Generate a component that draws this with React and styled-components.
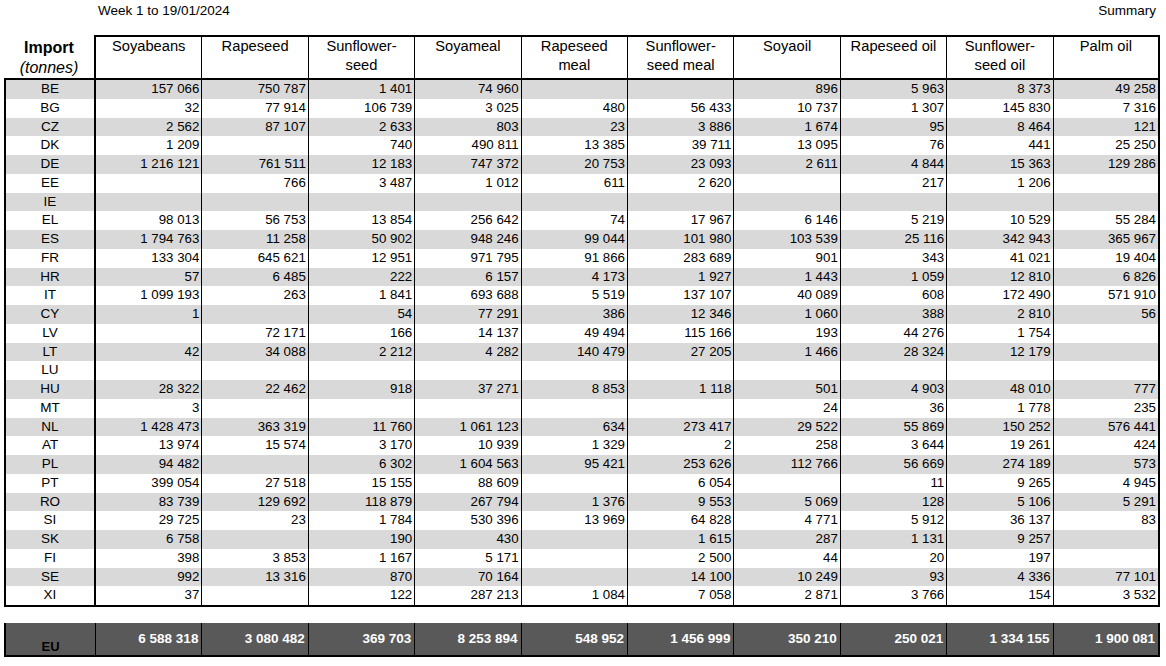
import React from "react"
import styled, { createGlobalStyle } from "styled-components"

const GlobalStyle = createGlobalStyle`
  body {
    margin: 0;
    background: #fff;
    color: #000;
    font-family: "Liberation Sans", Arial, sans-serif;
  }
`

const COLUMNS = "92px repeat(10, 1fr)"

const HEADINGS = [
  ["Soyabeans"],
  ["Rapeseed"],
  ["Sunflower-", "seed"],
  ["Soyameal"],
  ["Rapeseed", "meal"],
  ["Sunflower-", "seed meal"],
  ["Soyaoil"],
  ["Rapeseed oil"],
  ["Sunflower-", "seed oil"],
  ["Palm oil"],
]

const ROWS = [
  ["BE", "157 066", "750 787", "1 401", "74 960", "", "", "896", "5 963", "8 373", "49 258"],
  ["BG", "32", "77 914", "106 739", "3 025", "480", "56 433", "10 737", "1 307", "145 830", "7 316"],
  ["CZ", "2 562", "87 107", "2 633", "803", "23", "3 886", "1 674", "95", "8 464", "121"],
  ["DK", "1 209", "", "740", "490 811", "13 385", "39 711", "13 095", "76", "441", "25 250"],
  ["DE", "1 216 121", "761 511", "12 183", "747 372", "20 753", "23 093", "2 611", "4 844", "15 363", "129 286"],
  ["EE", "", "766", "3 487", "1 012", "611", "2 620", "", "217", "1 206", ""],
  ["IE", "", "", "", "", "", "", "", "", "", ""],
  ["EL", "98 013", "56 753", "13 854", "256 642", "74", "17 967", "6 146", "5 219", "10 529", "55 284"],
  ["ES", "1 794 763", "11 258", "50 902", "948 246", "99 044", "101 980", "103 539", "25 116", "342 943", "365 967"],
  ["FR", "133 304", "645 621", "12 951", "971 795", "91 866", "283 689", "901", "343", "41 021", "19 404"],
  ["HR", "57", "6 485", "222", "6 157", "4 173", "1 927", "1 443", "1 059", "12 810", "6 826"],
  ["IT", "1 099 193", "263", "1 841", "693 688", "5 519", "137 107", "40 089", "608", "172 490", "571 910"],
  ["CY", "1", "", "54", "77 291", "386", "12 346", "1 060", "388", "2 810", "56"],
  ["LV", "", "72 171", "166", "14 137", "49 494", "115 166", "193", "44 276", "1 754", ""],
  ["LT", "42", "34 088", "2 212", "4 282", "140 479", "27 205", "1 466", "28 324", "12 179", ""],
  ["LU", "", "", "", "", "", "", "", "", "", ""],
  ["HU", "28 322", "22 462", "918", "37 271", "8 853", "1 118", "501", "4 903", "48 010", "777"],
  ["MT", "3", "", "", "", "", "", "24", "36", "1 778", "235"],
  ["NL", "1 428 473", "363 319", "11 760", "1 061 123", "634", "273 417", "29 522", "55 869", "150 252", "576 441"],
  ["AT", "13 974", "15 574", "3 170", "10 939", "1 329", "2", "258", "3 644", "19 261", "424"],
  ["PL", "94 482", "", "6 302", "1 604 563", "95 421", "253 626", "112 766", "56 669", "274 189", "573"],
  ["PT", "399 054", "27 518", "15 155", "88 609", "", "6 054", "", "11", "9 265", "4 945"],
  ["RO", "83 739", "129 692", "118 879", "267 794", "1 376", "9 553", "5 069", "128", "5 106", "5 291"],
  ["SI", "29 725", "23", "1 784", "530 396", "13 969", "64 828", "4 771", "5 912", "36 137", "83"],
  ["SK", "6 758", "", "190", "430", "", "1 615", "287", "1 131", "9 257", ""],
  ["FI", "398", "3 853", "1 167", "5 171", "", "2 500", "44", "20", "197", ""],
  ["SE", "992", "13 316", "870", "70 164", "", "14 100", "10 249", "93", "4 336", "77 101"],
  ["XI", "37", "", "122", "287 213", "1 084", "7 058", "2 871", "3 766", "154", "3 532"],
]

const TOTAL = ["EU", "6 588 318", "3 080 482", "369 703", "8 253 894", "548 952", "1 456 999", "350 210", "250 021", "1 334 155", "1 900 081"]

const Page = styled.div`
  width: 1166px;
  height: 666px;
  overflow: hidden;
`

const TopBar = styled.div`
  display: flex;
  justify-content: space-between;

  height: 22px;
  padding: 0 10px 0 98px;

  font-size: 13.5px;
  line-height: 22px;
`

const Sheet = styled.div`
  width: 1156px;
  margin: 13px 0 0 4px;
`

const HeaderRow = styled.div`
  display: grid;
  grid-template-columns: ${COLUMNS};

  box-sizing: border-box;
  height: 45px;

  border-bottom: 2px solid #000;
`

const Corner = styled.div`
  display: flex;
  flex-direction: column;
  justify-content: flex-end;
  align-items: center;

  border-right: 2px solid #000;

  font-size: 16px;
  line-height: 20px;
`

const CornerTitle = styled.b``

const CornerUnit = styled.i``

const Heading = styled.div`
  box-sizing: border-box;

  border-top: 2px solid #000;
  border-right: 1px solid #000;

  text-align: center;
  font-size: 14.7px;
  line-height: 19px;

  &:last-child {
    border-right-width: 2px;
  }
`

const Body = styled.div`
  border-bottom: 2px solid #000;
`

const Row = styled.div`
  display: grid;
  grid-template-columns: ${COLUMNS};

  height: 18.75px;

  background: ${({ $shaded }) => ($shaded ? "#d9d9d9" : "#fff")};
  font-size: 13.3px;
  line-height: 18.75px;
`

const Country = styled.div`
  box-sizing: border-box;

  border-left: 2px solid #000;
  border-right: 2px solid #000;

  text-align: center;
  font-size: 13.5px;
`

const Value = styled.div`
  box-sizing: border-box;

  padding-right: 2px;

  border-right: 1px solid #000;

  text-align: right;
  white-space: nowrap;

  &:last-child {
    border-right-width: 2px;
  }
`

const TotalRow = styled.div`
  display: grid;
  grid-template-columns: ${COLUMNS};

  box-sizing: border-box;
  height: 34px;
  margin-top: 16px;

  border-bottom: 2px solid #000;

  background: #595959;
  font-weight: bold;
  font-size: 13.5px;
`

const TotalLabel = styled.div`
  display: flex;
  align-items: flex-end;
  justify-content: center;

  box-sizing: border-box;

  border-left: 2px solid #000;
  border-right: 1px solid #000;

  color: #000;
  font-size: 13px;
  line-height: 16px;
`

const TotalValue = styled.div`
  box-sizing: border-box;

  padding: 6px 3px 0 0;

  border-right: 1px solid #000;

  color: #fff;
  text-align: right;
  white-space: nowrap;
  line-height: 20px;

  &:last-child {
    border-right-width: 2px;
  }
`

export default function App() {
  return (
    <Page>
      <GlobalStyle />
      <TopBar>
        <span>Week 1 to 19/01/2024</span>
        <span>Summary</span>
      </TopBar>
      <Sheet>
        <HeaderRow>
          <Corner>
            <CornerTitle>Import</CornerTitle>
            <CornerUnit>(tonnes)</CornerUnit>
          </Corner>
          { HEADINGS.map((lines, i) =>
            <Heading key={ i }>
              { lines.map((line, j) => <div key={ j }>{ line }</div>) }
            </Heading>
          ) }
        </HeaderRow>
        <Body>
          { ROWS.map(([country, ...values], i) =>
            <Row key={ country } $shaded={ i % 2 === 0 }>
              <Country>{ country }</Country>
              { values.map((v, j) => <Value key={ j }>{ v }</Value>) }
            </Row>
          ) }
        </Body>
        <TotalRow>
          <TotalLabel>{ TOTAL[0] }</TotalLabel>
          { TOTAL.slice(1).map((v, j) => <TotalValue key={ j }>{ v }</TotalValue>) }
        </TotalRow>
      </Sheet>
    </Page>
  )
}
